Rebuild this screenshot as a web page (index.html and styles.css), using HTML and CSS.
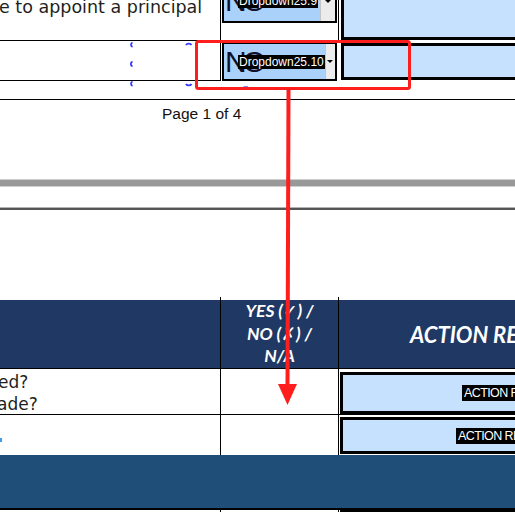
FILE: index.html
```html
<!DOCTYPE html>
<html lang="en">
<head>
<meta charset="utf-8">
<title>Form page</title>
<link rel="stylesheet" href="styles.css">
</head>
<body>
<div class="page">
  <div class="top">
    <div class="cell q-cell row-a"><span class="q-text">e to appoint a principal</span></div>
    <div class="cell dd-cell row-a-mid">
      <div class="dd dd-a">
        <div class="dd-body">
          <span class="dd-ghost">NO</span>
          <span class="dd-label">Dropdown25.9</span>
        </div>
        <div class="dd-btn"><span class="dd-caret"></span></div>
      </div>
    </div>
    <div class="cell fb-cell"><div class="fbox fbox-a"></div></div>

    <div class="cell q-cell row-b"></div>
    <div class="cell dd-cell">
      <div class="dd dd-b">
        <div class="dd-body">
          <span class="dd-ghost">NO</span>
          <span class="dd-label">Dropdown25.10</span>
        </div>
        <div class="dd-btn"><span class="dd-caret"></span></div>
      </div>
    </div>
    <div class="cell fb-cell"><div class="fbox fbox-b"></div></div>

    <div class="cell row-c"></div>
  </div>

  <div class="footer">Page 1 of 4</div>
  <div class="sep-thick"></div>
  <div class="sep-thin"></div>

  <div class="tbl">
    <div class="tick tick-l"></div>
    <div class="tick tick-l"></div>
    <div class="tick"></div>

    <div class="hd hd-l"></div>
    <div class="hd hd-l hd-yn">
      <span>YES (✓) /</span>
      <span>NO (✗) /</span>
      <span>N/A</span>
    </div>
    <div class="hd hd-act"><span>ACTION REQUIRED</span></div>

    <div class="r1 r1-l r1-text"><span class="cut">ed?</span><span class="cut cut-2">ade?</span></div>
    <div class="r1 r1-l"></div>
    <div class="r1"><div class="fbox abox abox-1"><span class="alabel">ACTION REQUIRED25.1</span></div></div>

    <div class="r2 r2-l"><span class="cursor"></span></div>
    <div class="r2 r2-l"></div>
    <div class="r2"><div class="fbox abox abox-2"><span class="alabel">ACTION REQUIRED25.10</span></div></div>

    <div class="band"></div>

    <div class="r3 r2-l"></div>
    <div class="r3 r2-l"></div>
    <div class="r3"><div class="fbox abox abox-3"></div></div>
  </div>

  <svg class="overlay" width="515" height="512" viewBox="0 0 515 512" aria-hidden="true">
    <g fill="none" stroke="#3838ff" stroke-width="1.8">
      <path d="M132.5 42.5 A3 2.6 0 0 0 132.5 47"/>
      <path d="M132.5 61.5 A3 2.8 0 0 0 132.5 66.5"/>
      <path d="M132.5 81.5 A3 2.6 0 0 0 132.5 86"/>
      <path d="M186 45 A3 2.4 0 0 1 191.5 45"/>
      <path d="M186 84 A3 2.4 0 0 0 191.5 84"/>
      <path d="M243.5 87 H248" stroke-width="1.2"/>
    </g>
    <rect x="196.5" y="41.5" width="213" height="47" rx="2" fill="none" stroke="#fe1e1e" stroke-width="3"/>
    <line x1="288.5" y1="90" x2="287.5" y2="388" stroke="#fe1e1e" stroke-width="4"/>
    <polygon points="278,384 297,384 287.5,405" fill="#fe1e1e"/>
  </svg>
</div>
</body>
</html>
```

FILE: styles.css
```css
* { box-sizing: border-box; }
html, body { margin: 0; padding: 0; }
body {
  width: 515px;
  height: 512px;
  overflow: hidden;
  background: #fff;
  font-family: "DejaVu Sans", sans-serif;
}
.page {
  position: relative;
  width: 515px;
  height: 512px;
  overflow: hidden;
}

/* ---------- top form rows ---------- */
.top {
  display: grid;
  width: 600px;
  grid-template-columns: 221px 118px 261px;
  grid-template-rows: 62px 40px 19px;
  margin-top: -21px;
}
.q-cell {
  border-right: 1px solid #000;
  border-bottom: 1px solid #000;
}
.row-a { padding-top: 18px; }
.q-text {
  display: block;
  margin-left: -1px;
  font-size: 17.5px;
  line-height: 20px;
  color: #231f20;
  white-space: nowrap;
}
.row-a-mid { border-right: 1px solid #000; }
.dd-cell { padding-left: 1px; }
.row-c {
  grid-column: 1 / -1;
  border-bottom: 1px solid #000;
}

.dd {
  display: flex;
  width: 115px;
  border: 2px solid #000;
  background: #aad1fa;
}
.dd-a { height: 44px; }
.dd-b { height: 39px; margin-top: 1px; }
.dd-body {
  flex: 1;
  position: relative;
  display: flex;
  align-items: center;
  padding-left: 14px;
}
.dd-ghost {
  position: absolute;
  left: 1px;
  top: 50%;
  transform: translateY(-50%);
  font-family: "Liberation Sans", sans-serif;
  font-size: 30px;
  line-height: 1;
  letter-spacing: -4px;
  color: #10102a;
}
.dd-label {
  position: relative;
  z-index: 1;
  background: #000;
  color: #fff;
  font-family: "Liberation Sans", sans-serif;
  font-size: 12px;
  line-height: 14px;
  padding: 0 1px;
  white-space: nowrap;
}
.dd-btn {
  width: 15px;
  background: #ececec;
  border-left: 1px solid #c4c4c4;
  display: flex;
  align-items: center;
  justify-content: center;
}
.dd-caret {
  width: 0;
  height: 0;
  border-left: 3px solid transparent;
  border-right: 3px solid transparent;
  border-top: 3px solid #000;
}

.fbox {
  border: 3px solid #000;
  background: #c6e1fd;
}
.fbox-a { height: 61px; margin-left: 2px; }
.fbox-b { height: 37px; margin: 2px 0 0 2px; }

/* ---------- footer and separators ---------- */
.footer {
  height: 79px;
  padding: 5px 0 0 162px;
  font-family: "Liberation Sans", sans-serif;
  font-size: 15.5px;
  line-height: 18px;
  color: #111;
}
.sep-thick {
  height: 8px;
  background: #999;
  border-top: 1px solid #cfcfcf;
  border-bottom: 1px solid #cfcfcf;
}
.sep-thin {
  height: 3px;
  margin-top: 20px;
  margin-bottom: 87px;
  background: #555;
  border-top: 1px solid #b4b4b4;
}

/* ---------- checklist table ---------- */
.tbl {
  display: grid;
  width: 600px;
  grid-template-columns: 221px 118px 261px;
}
.tick { height: 3px; }
.tick-l { border-right: 1px solid #000; }

.hd {
  height: 69px;
  background: #203864;
  border-bottom: 1px solid #000;
  color: #fff;
  font-family: Lato, "DejaVu Sans", sans-serif;
  font-style: italic;
  font-weight: 700;
}
.hd-l { border-right: 1px solid #000; }
.hd-yn {
  display: flex;
  flex-direction: column;
  justify-content: center;
  align-items: center;
  font-size: 17.5px;
  line-height: 22.5px;
}
.hd-act {
  display: flex;
  align-items: center;
  padding-left: 71px;
  font-size: 22px;
  white-space: nowrap;
  overflow: hidden;
}

.r1 {
  height: 46px;
  border-bottom: 1px solid #000;
}
.r1-l { border-right: 1px solid #000; }
.r1-text {
  display: flex;
  flex-direction: column;
  padding-top: 2px;
  font-size: 17px;
  line-height: 22px;
  color: #231f20;
}
.cut { margin-left: -2px; }
.cut-2 { margin-left: -3px; }

.r2 { height: 40px; }
.r2-l { border-right: 1px solid #000; }
.cursor {
  display: block;
  width: 2px;
  height: 4px;
  margin-top: 23px;
  background: #3aa0f5;
}

.abox {
  display: flex;
  align-items: center;
  margin-left: 1px;
  overflow: hidden;
  white-space: nowrap;
}
.abox-1 { height: 42px; margin-top: 3px; padding-left: 119px; }
.abox-2 { height: 37px; margin-top: 2px; padding-left: 113px; }
.abox-3 { height: 20px; }
.alabel {
  background: #000;
  color: #fff;
  font-family: "Liberation Sans", sans-serif;
  font-size: 12.5px;
  line-height: 16px;
  letter-spacing: -0.6px;
  padding: 0 2px;
}

.band {
  grid-column: 1 / -1;
  height: 55px;
  background: #1f4e79;
  border-bottom: 2px solid #000;
}
.r3 { height: 10px; }

.overlay {
  position: absolute;
  left: 0;
  top: 0;
  pointer-events: none;
}
```
